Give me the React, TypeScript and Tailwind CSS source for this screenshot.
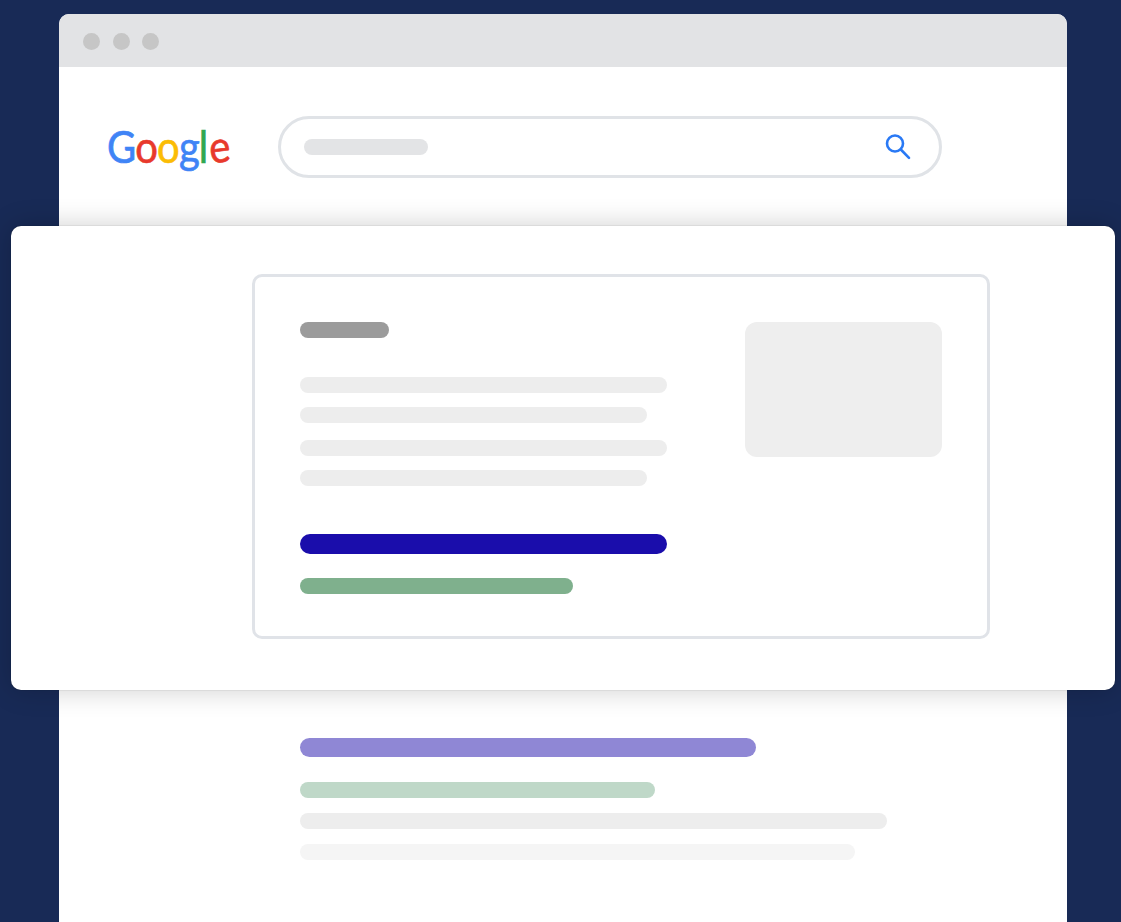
function Bar({ className }: { className: string }) {
  return <div className={`rounded-full ${className}`} />;
}

function GoogleLogo() {
  return (
    <div className="mb-[3px] flex w-[122px] scale-y-110 items-baseline font-['Lato',sans-serif] text-[40px] leading-none font-normal tracking-[-0.9px] [-webkit-text-stroke:0.6px]">
      <span className="text-[#3f84f6]">G</span>
      <span className="text-[#e8392c]">o</span>
      <span className="text-[#fbbc05]">o</span>
      <span className="text-[#3f84f6]">g</span>
      <span className="text-[#2fa84f]">l</span>
      <span className="ml-[2px] inline-block -rotate-6 text-[#e8392c]">e</span>
    </div>
  );
}

function SearchIcon() {
  return (
    <svg width="28" height="28" viewBox="0 0 28 28" fill="none" stroke="#2979f5" strokeWidth="2.6">
      <circle cx="11" cy="10.5" r="8" />
      <path d="M16.8 16.5 L25 24.8" strokeLinecap="round" />
    </svg>
  );
}

export default function App() {
  return (
    <div className="flex h-[922px] w-[1121px] flex-col overflow-hidden bg-[#182a56] pt-[14px] pr-[54px] pl-[59px]">
      <div className="flex flex-1 flex-col rounded-t-[10px] bg-white">
        <div className="flex h-[53px] items-center gap-[12.5px] rounded-t-[10px] bg-[#e2e3e5] pt-px pl-6">
          <div className="h-[17px] w-[17px] rounded-full bg-[#c6c6c6]" />
          <div className="h-[17px] w-[17px] rounded-full bg-[#c6c6c6]" />
          <div className="h-[17px] w-[17px] rounded-full bg-[#c6c6c6]" />
        </div>

        <div className="flex h-[159px] items-start pt-[49px] pl-12">
          <div className="flex h-[62px] w-[171px] items-center">
            <GoogleLogo />
          </div>
          <div className="flex h-[62px] w-[664px] items-center justify-between rounded-full border-[3px] border-[#e0e3e7] pr-[27px] pl-[23px]">
            <Bar className="h-4 w-[124px] bg-[#e3e4e6]" />
            <SearchIcon />
          </div>
        </div>

        <div className="relative -mx-12 flex h-[464px] rounded-[10px] bg-white pt-12 pl-[241px] shadow-[0_0_1px_rgba(0,0,0,0.5),0_0_28px_rgba(0,0,0,0.2)]">
          <div className="flex h-[365px] w-[738px] justify-between rounded-[10px] border-[3px] border-[#e0e3e8] pt-[45px] pr-[45px] pl-[45px]">
            <div className="flex w-[367px] flex-col">
              <Bar className="h-4 w-[89px] bg-[#9b9b9b]" />
              <Bar className="mt-[39px] h-4 w-[367px] bg-[#ededed]" />
              <Bar className="mt-[14px] h-4 w-[347px] bg-[#ededed]" />
              <Bar className="mt-[17px] h-4 w-[367px] bg-[#ededed]" />
              <Bar className="mt-[14px] h-4 w-[347px] bg-[#ededed]" />
              <Bar className="mt-12 h-5 w-[367px] bg-[#1a0dab]" />
              <Bar className="mt-6 h-4 w-[273px] bg-[#7fb08d]" />
            </div>
            <div className="h-[135px] w-[197px] rounded-xl bg-[#eeeeee]" />
          </div>
        </div>

        <div className="flex flex-col pt-12 pl-[241px]">
          <Bar className="h-[19px] w-[456px] bg-[#8f87d5]" />
          <Bar className="mt-[25px] h-4 w-[355px] bg-[#bfd8c8]" />
          <Bar className="mt-[15px] h-4 w-[587px] bg-[#ededed]" />
          <Bar className="mt-[15px] h-4 w-[555px] bg-[#f5f5f5]" />
        </div>
      </div>
    </div>
  );
}
